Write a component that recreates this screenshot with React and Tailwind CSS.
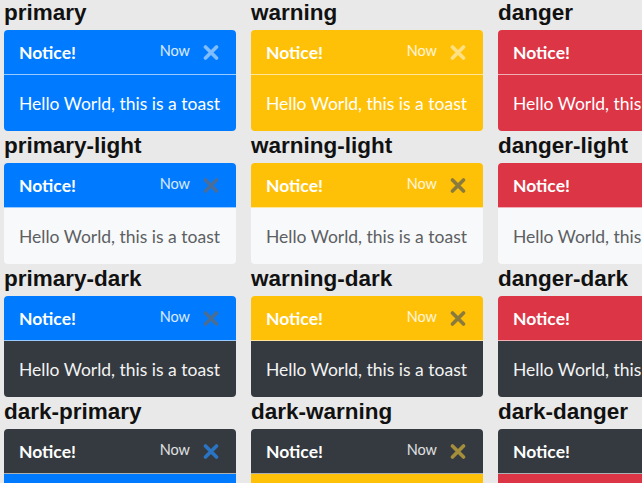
import React from "react";

const colors = {
  primary: { bg: "bg-[#007bff]", close: "text-[#007bff]" },
  warning: { bg: "bg-[#ffc107]", close: "text-[#ffc107]" },
  danger: { bg: "bg-[#dc3545]", close: "text-[#dc3545]" },
};

// each toast: header colour, body colour, body text colour, close button colour
function variantsFor(name) {
  const c = colors[name];
  return [
    {
      label: name,
      head: c.bg,
      body: c.bg,
      text: "text-white",
      close: "text-white/50",
    },
    {
      label: `${name}-light`,
      head: c.bg,
      body: "bg-[#f8f9fa]",
      text: "text-[#5c5f63]",
      close: name === "warning" ? "text-[#8a7a3c]" : name === "danger" ? "text-[#8a4a55]" : "text-[#4a6e99]",
    },
    {
      label: `${name}-dark`,
      head: c.bg,
      body: "bg-[#343a40]",
      text: "text-[#f3f3f3]",
      close: name === "warning" ? "text-[#8a7a3c]" : name === "danger" ? "text-[#8a4a55]" : "text-[#4a6d94]",
    },
    {
      label: `dark-${name}`,
      head: "bg-[#343a40]",
      body: c.bg,
      text: "text-white",
      close: name === "warning" ? "text-[#a48e3c]" : name === "danger" ? "text-[#b0444f]" : "text-[#2a74c4]",
    },
  ];
}

function CloseIcon({ className }) {
  return (
    <svg width="16" height="15" viewBox="0 0 16 15" className={className}>
      <path d="M2.5 2 L13.5 13 M13.5 2 L2.5 13" stroke="currentColor" strokeWidth="3.6" strokeLinecap="round" />
    </svg>
  );
}

function Toast({ v }) {
  return (
    <div className="w-[232px] h-[101px] rounded-[4px] overflow-hidden flex flex-col">
      <div className={`${v.head} h-[45px] flex items-center pl-[15px] pr-[17px] pt-[2px] border-b border-white/60 shrink-0`}>
        <span className="font-bold text-white text-[17.5px] flex-1">Notice!</span>
        <span className="text-white/85 text-[14.5px] mr-[13px] -mt-[4px]">Now</span>
        <CloseIcon className={`${v.close} -mt-[1px]`} />
      </div>
      <div className={`${v.body} ${v.text} flex-1 flex items-center pl-[15px] pt-[3px] text-[17.5px] whitespace-nowrap`}>
        Hello World, this is a toast
      </div>
    </div>
  );
}

export default function App() {
  const rows = [0, 1, 2, 3];
  const names = ["primary", "warning", "danger"];
  const all = names.map(variantsFor);

  return (
    <div className="w-full h-screen overflow-hidden bg-[#e9e9e9] pt-[2px] pl-[4px] font-['Lato',sans-serif]">
      <div className="grid grid-cols-[247px_247px_247px]">
        {rows.map((r) =>
          all.map((col) => {
            const v = col[r];
            return (
              <div key={v.label} className="pb-[4px]">
                <div className="h-[28px] leading-[22px] text-[22.5px] font-semibold text-[#111] font-['Liberation_Sans',sans-serif]">
                  {v.label}
                </div>
                <Toast v={v} />
              </div>
            );
          })
        )}
      </div>
    </div>
  );
}
